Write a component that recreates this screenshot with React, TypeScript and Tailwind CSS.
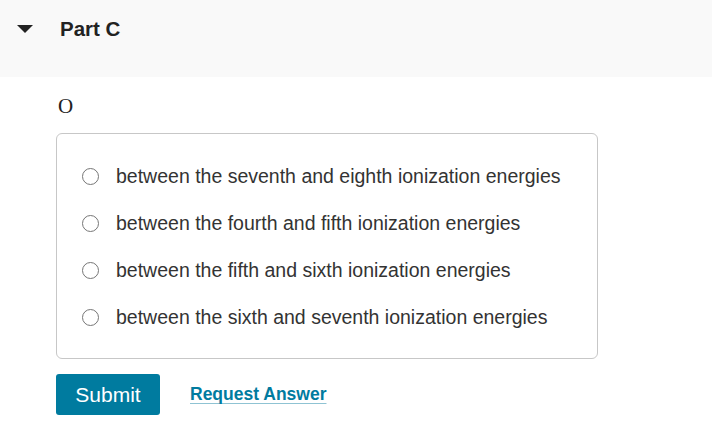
import React from "react";

const options = [
  "between the seventh and eighth ionization energies",
  "between the fourth and fifth ionization energies",
  "between the fifth and sixth ionization energies",
  "between the sixth and seventh ionization energies",
];

export default function App() {
  return (
    <div className="w-[712px] h-[430px] bg-white font-['Liberation_Sans',Arial,sans-serif] text-[#333]">
      <div className="h-[77px] bg-[#f9f9f9] flex items-start pt-[17px]">
        <div className="w-[60px] flex pl-[17px] pt-[8px]">
          <svg width="16" height="8" viewBox="0 0 16 8">
            <polygon points="0,0 16,0 8,8" fill="#222" />
          </svg>
        </div>
        <h2 className="text-[20.5px] font-bold text-[#222] leading-[24px]">Part C</h2>
      </div>
      <div className="pl-[56px]">
        <div className="font-['Liberation_Serif',serif] text-[21px] text-[#222] pt-[17px] pl-[2px] leading-[24px]">O</div>
        <div className="mt-[15px] w-[542px] h-[226px] border border-[#c7c7c7] rounded-[6px] pt-[31px] pl-[25px] flex flex-col gap-[25px]">
          {options.map((o) => (
            <label key={o} className="flex items-center h-[22px]">
              <span className="w-[17px] h-[17px] rounded-full border-[1.5px] border-[#767676] bg-white mr-[17px]" />
              <span className="text-[19.5px] leading-[22px] text-[#333]">{o}</span>
            </label>
          ))}
        </div>
        <div className="flex items-center mt-[15px]">
          <button className="w-[104px] h-[41px] bg-[#007b9f] rounded-[3px] text-white text-[21px] leading-[24px]">Submit</button>
          <a className="ml-[30px] text-[17.5px] font-bold text-[#007b9f] underline underline-offset-[3px] decoration-[#8fc3d3]">Request Answer</a>
        </div>
      </div>
    </div>
  );
}
